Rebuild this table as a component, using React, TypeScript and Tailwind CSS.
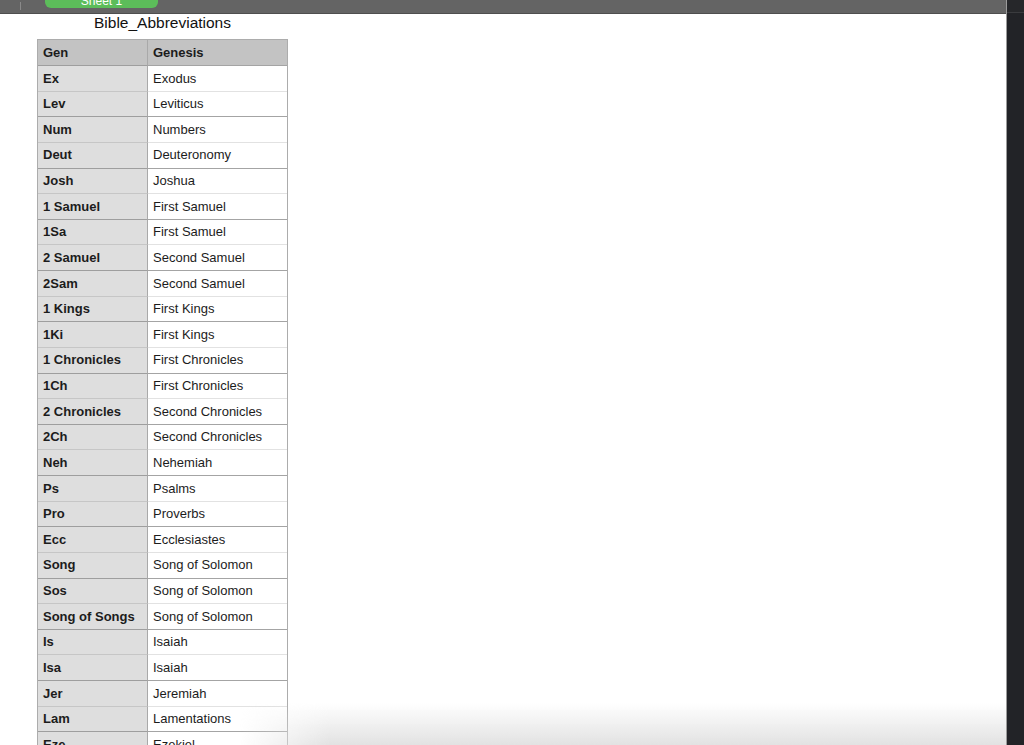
const rows: [string, string][] = [
  ["Ex", "Exodus"],
  ["Lev", "Leviticus"],
  ["Num", "Numbers"],
  ["Deut", "Deuteronomy"],
  ["Josh", "Joshua"],
  ["1 Samuel", "First Samuel"],
  ["1Sa", "First Samuel"],
  ["2 Samuel", "Second Samuel"],
  ["2Sam", "Second Samuel"],
  ["1 Kings", "First Kings"],
  ["1Ki", "First Kings"],
  ["1 Chronicles", "First Chronicles"],
  ["1Ch", "First Chronicles"],
  ["2 Chronicles", "Second Chronicles"],
  ["2Ch", "Second Chronicles"],
  ["Neh", "Nehemiah"],
  ["Ps", "Psalms"],
  ["Pro", "Proverbs"],
  ["Ecc", "Ecclesiastes"],
  ["Song", "Song of Solomon"],
  ["Sos", "Song of Solomon"],
  ["Song of Songs", "Song of Solomon"],
  ["Is", "Isaiah"],
  ["Isa", "Isaiah"],
  ["Jer", "Jeremiah"],
  ["Lam", "Lamentations"],
  ["Eze", "Ezekiel"],
];

export default function App() {
  return (
    <div className="flex h-[745px] w-[1024px] overflow-hidden bg-white font-['Liberation_Sans',Arial,sans-serif] text-[#1c1c1c]">
      {/* Sheet area */}
      <div className="relative flex w-[1006px] flex-col">
        {/* Tab bar */}
        <div className="flex h-[14px] shrink-0 items-end border-b border-[#4e4e4e] bg-[#646464]">
          <div className="mb-[3px] ml-[20px] h-[8px] w-px bg-[#8a8a8a]" />
          <div className="mb-[3px] ml-[24px] flex h-[11px] w-[113px] -translate-y-[3px] items-end justify-center self-start rounded-b-[6px] bg-[#5cbd5a] pb-[1px] text-[12px] leading-[12px] text-white">
            Sheet 1
          </div>
        </div>

        {/* Content */}
        <div className="flex flex-col pl-[37px]">
          <div className="flex w-[251px] justify-center text-[15.5px] leading-[17px] text-[#111]">
            Bible_Abbreviations
          </div>
          <div className="mt-[8px] w-[251px] border border-[#acacac] text-[13px]">
            <div className="flex h-[25px] bg-[#c3c3c3] font-bold">
              <div className="flex w-[110px] items-center border-r border-[#a9a9a9] px-[5px]">Gen</div>
              <div className="flex flex-1 items-center px-[5px]">Genesis</div>
            </div>
            {rows.map(([abbr, name], i) => {
              const dark = i % 2 === 0;
              return (
                <div key={i} className="flex h-[25.64px]">
                  <div
                    className={`flex w-[110px] items-center border-r border-t border-r-[#a9a9a9] bg-[#dedede] px-[5px] font-bold ${
                      dark ? "border-t-[#9e9e9e]" : "border-t-[#c6c6c6]"
                    }`}
                  >
                    {abbr}
                  </div>
                  <div
                    className={`flex flex-1 items-center border-t bg-white px-[5px] ${
                      dark ? "border-t-[#a4a4a4]" : "border-t-[#e2e2e2]"
                    }`}
                  >
                    {name}
                  </div>
                </div>
              );
            })}
          </div>
        </div>

        {/* bottom fade */}
        <div className="pointer-events-none absolute bottom-0 left-[240px] right-0 h-[42px] bg-gradient-to-b from-transparent to-[#e2e2e2] [mask-image:linear-gradient(to_right,transparent,black_90px)]" />
      </div>

      {/* Right dark strip */}
      <div className="flex w-[18px] flex-col border-l border-[#9b9b9b] bg-[#222327]">
        <div className="h-[13px] border-b border-[#3a3b3e] bg-[#26272a]" />
      </div>
    </div>
  );
}
